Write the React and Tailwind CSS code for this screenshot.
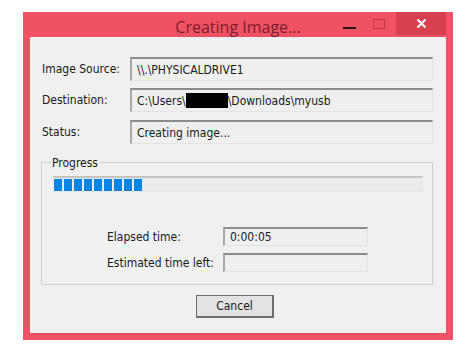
import React from "react";

const field =
  "h-[24px] border-t-[2px] border-l-[2px] border-r border-b border-[#e4e4e4] border-t-[#8c8c8c] border-l-[#a8a8a8] bg-[#efefef] flex items-center px-[5px] text-[12px] text-[#1a1a1a]";
const smallField =
  "h-[19px] w-[145px] border-t-[2px] border-l-[2px] border-r border-b border-[#e4e4e4] border-t-[#8c8c8c] border-l-[#a8a8a8] bg-[#efefef] flex items-center px-[5px] text-[12px] text-[#1a1a1a]";

function Row({ label, children, className = "" }) {
  return (
    <div className={"flex items-center " + className}>
      <div className="w-[88px] text-[12px] text-[#1a1a1a]">{label}</div>
      <div className={field + " w-[303px]"}>{children}</div>
    </div>
  );
}

export default function App() {
  return (
    <div
      className="w-[474px] h-[353px] bg-white pt-[12px] pl-[23px]"
      style={{ fontFamily: "'DejaVu Sans Condensed', 'DejaVu Sans', sans-serif" }}
    >
      <div className="w-[430px] h-[328px] bg-[#ef5264] px-[7px] pb-[7px] flex flex-col">
        {/* title bar */}
        <div className="relative h-[25px] flex items-center justify-center shrink-0">
          <span
            className="text-[16px] text-[#7d1c2b] mt-[5px]"
            style={{ fontFamily: "'Open Sans', 'Noto Sans', sans-serif" }}
          >
            Creating Image...
          </span>
          <div className="absolute right-[0px] top-0 flex items-start">
            <div className="w-[13px] h-[2px] bg-[#2a1414] mt-[15px] mr-[17px]" />
            <div className="w-[12px] h-[10px] border border-[#c23848] mt-[7px] mr-[11px]" />
            <div className="w-[50px] h-[23px] bg-[#d9404f] flex items-center justify-center">
              <svg width="11" height="11" viewBox="0 0 11 11">
                <path d="M1.5 1.5 L9.5 9.5 M9.5 1.5 L1.5 9.5" stroke="#ffffff" strokeWidth="2.2" />
              </svg>
            </div>
          </div>
        </div>
        {/* client */}
        <div className="flex-1 bg-[#f0f0f0] pt-[20px] pl-[12px] pr-[12px] flex flex-col">
          <Row label="Image Source:">\\.\PHYSICALDRIVE1</Row>
          <Row label="Destination:" className="mt-[7px]">
            C:\Users\<span className="inline-block w-[42px] h-[15px] bg-black" />\Downloads\myusb
          </Row>
          <Row label="Status:" className="mt-[8px]">Creating image...</Row>

          {/* group box */}
          <div className="relative mt-[18px] ml-[-1px] w-[392px] h-[123px] border border-[#cfcfcf] pt-[13px] pl-[11px]">
            <span className="absolute left-[8px] top-[-9px] bg-[#f0f0f0] px-[2px] text-[12px] text-[#1a1a1a]">
              Progress
            </span>
            <div className="w-[370px] h-[16px] border-t-[2px] border-[#e6e6e6] border-t-[#c4c4c4] border-b border-r bg-[#ebebeb] flex items-center gap-[2px] pl-[1px]">
              {Array.from({ length: 9 }).map((_, i) => (
                <div key={i} className="w-[8px] h-[12px] bg-[#0a84e6]" />
              ))}
            </div>
            <div className="flex items-center mt-[35px]">
              <div className="w-[170px] pl-[54px] text-[12px] text-[#1a1a1a]">Elapsed time:</div>
              <div className={smallField}>0:00:05</div>
            </div>
            <div className="flex items-center mt-[7px]">
              <div className="w-[170px] pl-[54px] text-[12px] text-[#1a1a1a]">Estimated time left:</div>
              <div className={smallField} />
            </div>
          </div>

          <div className="flex justify-center mt-[10px] pr-[6px]">
            <button className="w-[78px] h-[23px] border border-[#6e6e6e] border-r-[2px] border-b-[2px] bg-[#e3e3e3] text-[12px] text-[#1a1a1a]">
              Cancel
            </button>
          </div>
        </div>
      </div>
    </div>
  );
}
